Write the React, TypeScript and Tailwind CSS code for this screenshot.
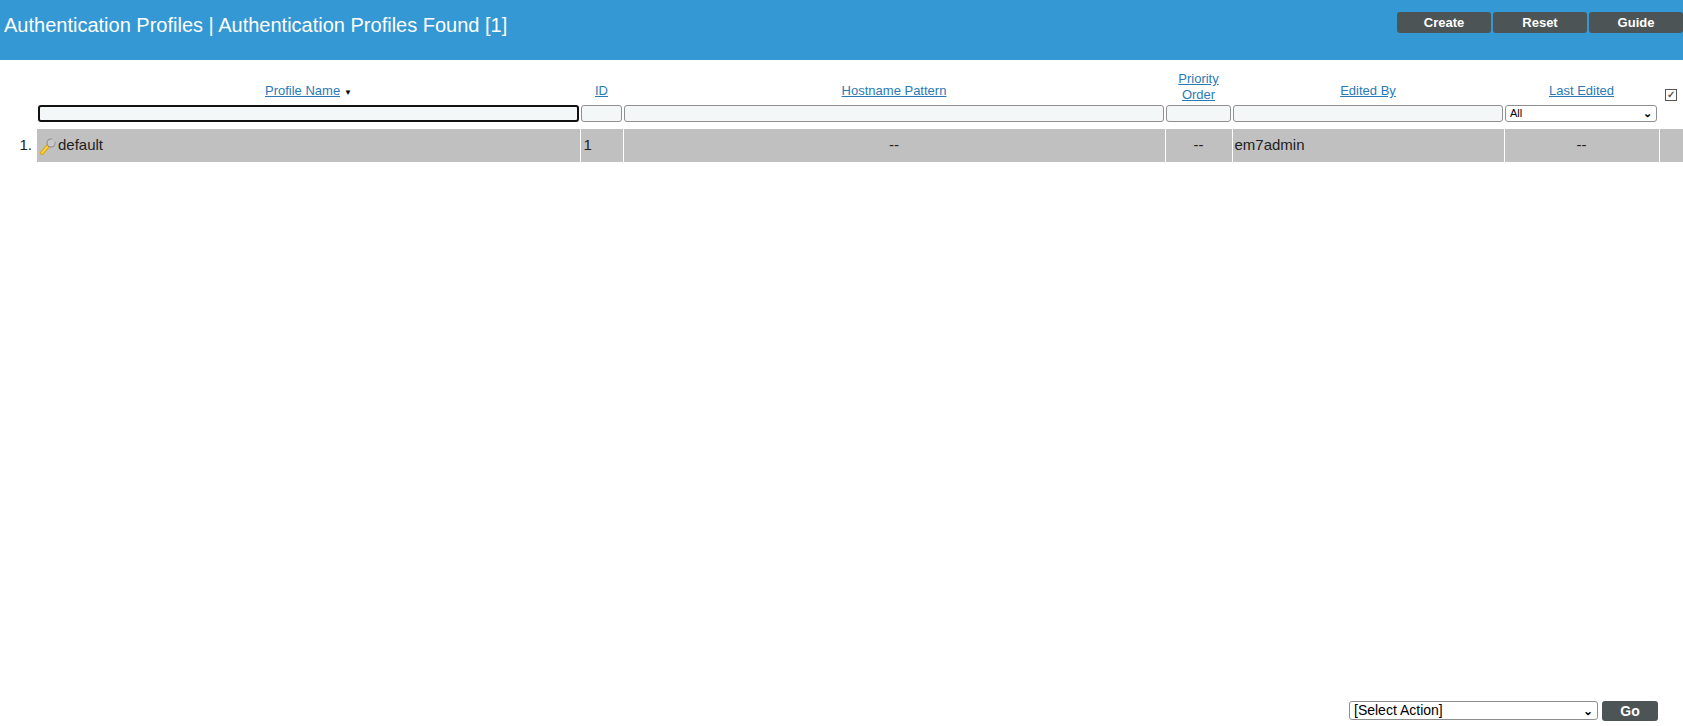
import React from 'react';

const font = { fontFamily: '"Liberation Sans", Arial, sans-serif' };

function Wrench() {
    return (
        <svg width="18" height="18" viewBox="0 0 18 18" className="shrink-0">
            <path d="M3 16 L9 9" stroke="#e0a000" strokeWidth="4" strokeLinecap="round" />
            <path d="M3 16 L9 9" stroke="#ffd040" strokeWidth="2" strokeLinecap="round" />
            <circle cx="12" cy="6" r="4.5" fill="#8a8a8a" />
            <circle cx="12" cy="6" r="3.5" fill="#c8c8c8" />
            <path d="M12 2 L16 2 L16 6 Z" fill="#c0c0c0" />
        </svg>
    );
}

const inputCls = 'h-[17px] w-full rounded-[3px] border border-[#8f8f8f] bg-[#f4f7f8]';
const linkCls = 'text-[13px] text-[#2a7ab8] underline';

export default function App() {
    return (
        <div className="h-[726px] w-[1683px] bg-white flex flex-col" style={font}>
            <div className="h-[60px] bg-[#3398d4] flex items-start justify-between">
                <div className="text-white text-[20px] pl-[4px] pt-[10px]">
                    Authentication Profiles | Authentication Profiles Found [1]
                </div>
                <div className="flex gap-[2px] pt-[12px]">
                    {['Create', 'Reset', 'Guide'].map((b) => (
                        <button key={b} className="w-[94px] h-[21px] rounded-[3px] bg-[#4c5456] text-white text-[13px] font-bold">
                            {b}
                        </button>
                    ))}
                </div>
            </div>

            <table className="mt-[10px] w-[1683px] table-fixed border-collapse">
                <colgroup>
                    <col className="w-[37px]" />
                    <col className="w-[543px]" />
                    <col className="w-[43px]" />
                    <col className="w-[542px]" />
                    <col className="w-[67px]" />
                    <col className="w-[272px]" />
                    <col className="w-[155px]" />
                    <col className="w-[24px]" />
                </colgroup>
                <thead>
                    <tr className="align-bottom">
                        <th></th>
                        <th className="font-normal pb-[3px]"><span className={linkCls}>Profile Name</span><span className="text-[8px] ml-[4px]">▼</span></th>
                        <th className="font-normal pb-[3px]"><span className={linkCls}>ID</span></th>
                        <th className="font-normal pb-[3px]"><span className={linkCls}>Hostname Pattern</span></th>
                        <th className="font-normal pb-[3px] leading-[15px]"><span className={linkCls}>Priority<br />Order</span></th>
                        <th className="font-normal pb-[3px]"><span className={linkCls}>Edited By</span></th>
                        <th className="font-normal pb-[3px]"><span className={linkCls}>Last Edited</span></th>
                        <th className="pb-[4px]">
                            <div className="mx-auto w-[12px] h-[12px] border border-[#555] text-[10px] leading-[10px] text-[#555]">✓</div>
                        </th>
                    </tr>
                    <tr>
                        <td></td>
                        <td className="px-[1px] pb-[7px]"><div className="h-[17px] w-full rounded-[3px] border-2 border-[#111] bg-[#f4f7f8]" /></td>
                        <td className="px-[1px] pb-[7px]"><div className={inputCls} /></td>
                        <td className="px-[1px] pb-[7px]"><div className={inputCls} /></td>
                        <td className="px-[1px] pb-[7px]"><div className={inputCls} /></td>
                        <td className="px-[1px] pb-[7px]"><div className={inputCls} /></td>
                        <td className="px-[1px] pb-[7px]">
                            <div className="h-[17px] w-[152px] rounded-[3px] border border-[#8f8f8f] bg-white flex items-center justify-between px-[4px] text-[11px]">
                                <span>All</span><span className="text-[11px] font-bold">⌄</span>
                            </div>
                        </td>
                        <td className="pb-[7px]"></td>
                    </tr>
                </thead>
                <tbody>
                    <tr className="h-[33px] text-[15px] text-[#222]">
                        <td className="text-right pr-[5px]">1.</td>
                        <td className="bg-[#c0c0c0] border-r border-white pl-[2px]">
                            <div className="flex items-center gap-[1px]"><Wrench />default</div>
                        </td>
                        <td className="bg-[#c0c0c0] border-r border-white pl-[3px]">1</td>
                        <td className="bg-[#c0c0c0] border-r border-white text-center">--</td>
                        <td className="bg-[#c0c0c0] border-r border-white text-center">--</td>
                        <td className="bg-[#c0c0c0] border-r border-white pl-[2px]">em7admin</td>
                        <td className="bg-[#c0c0c0] border-r border-white text-center">--</td>
                        <td className="bg-[#c0c0c0]"></td>
                    </tr>
                </tbody>
            </table>

            <div className="flex-1" />
            <div className="flex justify-end gap-[4px] pr-[25px] pb-[5px]">
                <div className="h-[19px] w-[249px] rounded-[3px] border border-[#8f8f8f] flex items-center justify-between px-[4px] text-[14px]">
                    <span>[Select Action]</span><span className="font-bold text-[12px]">⌄</span>
                </div>
                <button className="h-[20px] w-[56px] rounded-[3px] bg-[#4c5456] text-white text-[14px] font-bold">Go</button>
            </div>
        </div>
    );
}
